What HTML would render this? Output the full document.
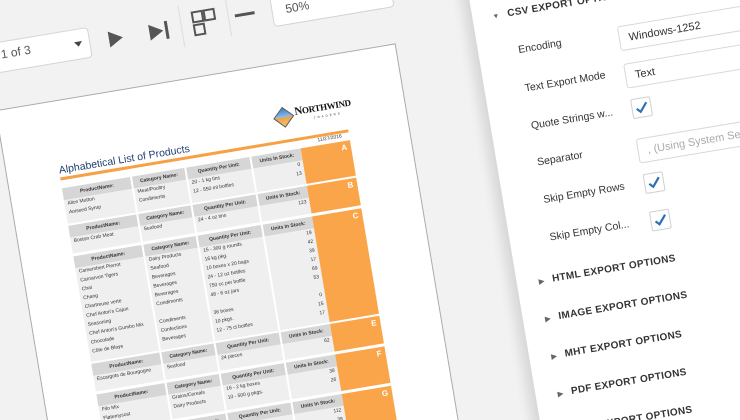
<!DOCTYPE html>
<html><head><meta charset="utf-8">
<style>
html,body{margin:0;padding:0;overflow:hidden;width:740px;height:420px;}
body{background:#f2f2f2;position:relative;font-family:"Liberation Sans",sans-serif;}
#w{position:absolute;left:0;top:0;width:1px;height:1px;transform-origin:0 0;transform:rotate(-9.5deg);}
.a{position:absolute;white-space:nowrap;}
.page{left:-23px;top:108px;width:404px;height:520px;background:#fff;border:1px solid #aaa;}
.panel{left:463px;top:-120px;width:420px;height:820px;background:#fff;box-shadow:-7px 0 12px rgba(0,0,0,.12);}
.sel{left:-60px;top:41px;width:140px;height:29px;background:#fff;border:1px solid #d4d4d4;border-radius:4px;}
.zoom{left:266px;top:30px;width:120px;height:40px;background:#fff;border:1px solid #d4d4d4;border-radius:4px;}
.tb{font-size:12px;color:#555;}
.sep{width:1px;background:#ddd;}
.lbl{font-size:10.5px;color:#333;left:503px;}
.inp{left:604px;width:220px;height:25px;border:1px solid #d8d8d8;border-radius:3px;background:#fff;font-size:11px;color:#333;line-height:25px;padding-left:9px;box-sizing:border-box;}
.cb{left:605px;width:20px;height:20px;border:1px solid #d0d0d0;border-radius:2px;background:#fff;box-sizing:border-box;}
.grp{left:485px;font-size:10px;font-weight:bold;color:#333;letter-spacing:.3px;}
.grp i{font-style:normal;font-size:7px;color:#666;margin-right:8px;}
table{border-collapse:separate;border-spacing:2px 0;table-layout:fixed;position:absolute;left:-2px;top:0;width:244px;}
td{font-size:5px;color:#333;padding:0 3px;overflow:hidden;white-space:nowrap;background:#efefef;line-height:9px;vertical-align:top;}
td.h{background:#d6d6d6;font-weight:bold;text-align:center;vertical-align:middle;}
td.r{text-align:right;}
.or{position:absolute;left:242px;top:0;width:50px;background:#fba54a;color:#fff;font-size:8px;font-weight:bold;text-align:right;box-sizing:border-box;padding:2px 4px;}
</style></head><body>
<div id="w">
  <div class="a sel"></div>
  <div class="a tb" style="left:-8px;top:47px;font-size:12px;">1 of 3</div>
  <div class="a" style="left:66px;top:54px;width:0;height:0;border-left:4px solid transparent;border-right:4px solid transparent;border-top:5px solid #444;"></div>
  <div class="a" style="left:101px;top:49px;width:0;height:0;border-top:8px solid transparent;border-bottom:8px solid transparent;border-left:14px solid #555;"></div>
  <div class="a" style="left:142px;top:49px;width:0;height:0;border-top:8px solid transparent;border-bottom:8px solid transparent;border-left:14px solid #555;"></div>
  <div class="a" style="left:158px;top:48px;width:3px;height:18px;background:#555;"></div>
  <div class="a sep" style="left:174px;top:35px;height:42px;"></div>
  <div class="a" style="left:186px;top:43px;width:8px;height:8px;border:2px solid #555;"></div>
  <div class="a" style="left:198px;top:43px;width:8px;height:8px;border:2px solid #555;"></div>
  <div class="a" style="left:186px;top:56px;width:8px;height:8px;border:2px solid #555;"></div>
  <div class="a sep" style="left:222px;top:32px;height:42px;"></div>
  <div class="a" style="left:229px;top:53px;width:20px;height:3px;background:#555;"></div>
  <div class="a zoom"></div>
  <div class="a tb" style="left:280px;top:49px;">50%</div>

  <div class="a page"></div>
  <div class="a" style="left:250px;top:152px;width:20px;height:20px;">
    <div style="position:absolute;left:3px;top:3px;width:13px;height:13px;transform:rotate(45deg);background:linear-gradient(135deg,#3a76c4,#8fc1ee 50%,#f0a040 51%,#f7c46f);border:1px solid #555;"></div>
  </div>
  <div class="a" style="left:272px;top:153px;font-family:'Liberation Serif',serif;font-size:11px;font-weight:bold;color:#111;letter-spacing:-.3px;">N<span style="font-size:9px">ORTHWIND</span></div>
  <div class="a" style="left:290px;top:166px;font-size:3px;letter-spacing:2px;color:#333;">TRADERS</div>
  <div class="a" style="left:30px;top:172px;font-size:10.5px;color:#1f3f6f;">Alphabetical List of Products</div>
  <div class="a" style="left:30px;top:185px;width:292px;height:3px;background:#f7a044;"></div>
  <div class="a" style="left:290px;top:188px;font-size:5px;color:#333;">11/27/2016</div>

  <div class="a" style="left:30px;top:196px;width:292px;height:36px;">
    <table style="height:36px"><colgroup><col style="width:69px"><col style="width:53px"><col style="width:64px"><col style="width:50px"></colgroup>
    <tr style="height:12px"><td class="h">ProductName:</td><td class="h">Category Name:</td><td class="h">Quantity Per Unit:</td><td class="h">Units In Stock:</td></tr>
    <tr><td>Alice Mutton<br>Aniseed Syrup</td><td>Meat/Poultry<br>Condiments</td><td>20 - 1 kg tins<br>12 - 550 ml bottles</td><td class="r">0<br>13</td></tr></table>
    <div class="or" style="height:36px">A</div>
  </div>
  <div class="a" style="left:30px;top:234px;width:292px;height:28px;">
    <table style="height:28px"><colgroup><col style="width:69px"><col style="width:53px"><col style="width:64px"><col style="width:50px"></colgroup>
    <tr style="height:12px"><td class="h">ProductName:</td><td class="h">Category Name:</td><td class="h">Quantity Per Unit:</td><td class="h">Units In Stock:</td></tr>
    <tr><td>Boston Crab Meat</td><td>Seafood</td><td>24 - 4 oz tins</td><td class="r">123</td></tr></table>
    <div class="or" style="height:28px">B</div>
  </div>
  <div class="a" style="left:30px;top:265px;width:292px;height:107px;">
    <table style="height:107px"><colgroup><col style="width:69px"><col style="width:53px"><col style="width:64px"><col style="width:50px"></colgroup>
    <tr style="height:12px"><td class="h">ProductName:</td><td class="h">Category Name:</td><td class="h">Quantity Per Unit:</td><td class="h">Units In Stock:</td></tr>
    <tr><td>Camembert Pierrot<br>Carnarvon Tigers<br>Chai<br>Chang<br>Chartreuse verte<br>Chef Anton's Cajun<br>Seasoning<br>Chef Anton's Gumbo Mix<br>Chocolade<br>Côte de Blaye</td>
    <td>Dairy Products<br>Seafood<br>Beverages<br>Beverages<br>Beverages<br>Condiments<br><br>Condiments<br>Confections<br>Beverages</td>
    <td>15 - 300 g rounds<br>16 kg pkg.<br>10 boxes x 20 bags<br>24 - 12 oz bottles<br>750 cc per bottle<br>48 - 6 oz jars<br><br>36 boxes<br>10 pkgs.<br>12 - 75 cl bottles</td>
    <td class="r">19<br>42<br>39<br>17<br>69<br>53<br><br>0<br>15<br>17</td></tr></table>
    <div class="or" style="height:107px">C</div>
  </div>
  <div class="a" style="left:30px;top:374px;width:292px;height:28px;">
    <table style="height:28px"><colgroup><col style="width:69px"><col style="width:53px"><col style="width:64px"><col style="width:50px"></colgroup>
    <tr style="height:12px"><td class="h">ProductName:</td><td class="h">Category Name:</td><td class="h">Quantity Per Unit:</td><td class="h">Units In Stock:</td></tr>
    <tr><td>Escargots de Bourgogne</td><td>Seafood</td><td>24 pieces</td><td class="r">62</td></tr></table>
    <div class="or" style="height:28px">E</div>
  </div>
  <div class="a" style="left:30px;top:405px;width:292px;height:37px;">
    <table style="height:37px"><colgroup><col style="width:69px"><col style="width:53px"><col style="width:64px"><col style="width:50px"></colgroup>
    <tr style="height:12px"><td class="h">ProductName:</td><td class="h">Category Name:</td><td class="h">Quantity Per Unit:</td><td class="h">Units In Stock:</td></tr>
    <tr><td>Filo Mix<br>Fløtemysost</td><td>Grains/Cereals<br>Dairy Products</td><td>16 - 2 kg boxes<br>10 - 500 g pkgs.</td><td class="r">38<br>26</td></tr></table>
    <div class="or" style="height:37px">F</div>
  </div>
  <div class="a" style="left:30px;top:445px;width:292px;height:120px;">
    <table style="height:120px"><colgroup><col style="width:69px"><col style="width:53px"><col style="width:64px"><col style="width:50px"></colgroup>
    <tr style="height:12px"><td class="h">ProductName:</td><td class="h">Category Name:</td><td class="h">Quantity Per Unit:</td><td class="h">Units In Stock:</td></tr>
    <tr><td>Geitost<br>Genen Shouyu<br>Gnocchi di nonna Alice<br>Gorgonzola Telino</td><td>Dairy Products<br>Condiments<br>Grains/Cereals<br>Dairy Products</td><td>500 g<br>24 - 250 ml bottles<br>24 - 250 g pkgs.<br>12 - 100 g pkgs</td><td class="r">112<br>39<br>21<br>0</td></tr></table>
    <div class="or" style="height:120px">G</div>
  </div>

  <div class="a panel"></div>
  <div class="a grp" style="top:92px;left:483px;"><i>▼</i>CSV EXPORT OPTIONS</div>
  <div class="a lbl" style="top:129px;">Encoding</div>
  <div class="a inp" style="top:128px;">Windows-1252</div>
  <div class="a lbl" style="top:168px;">Text Export Mode</div>
  <div class="a inp" style="top:166px;">Text</div>
  <div class="a lbl" style="top:206px;">Quote Strings w...</div>
  <div class="a cb" style="top:202px;"><svg width="18" height="18" viewBox="0 0 18 18"><path d="M4 9.5 L7.5 13 L14.5 4.5" fill="none" stroke="#2f6fb5" stroke-width="2.2"/></svg></div>
  <div class="a lbl" style="top:243px;">Separator</div>
  <div class="a inp" style="top:242px;color:#aaa;">, (Using System Separator)</div>
  <div class="a lbl" style="top:281px;">Skip Empty Rows</div>
  <div class="a cb" style="top:278px;"><svg width="18" height="18" viewBox="0 0 18 18"><path d="M4 9.5 L7.5 13 L14.5 4.5" fill="none" stroke="#2f6fb5" stroke-width="2.2"/></svg></div>
  <div class="a lbl" style="top:319px;">Skip Empty Col...</div>
  <div class="a cb" style="top:316px;"><svg width="18" height="18" viewBox="0 0 18 18"><path d="M4 9.5 L7.5 13 L14.5 4.5" fill="none" stroke="#2f6fb5" stroke-width="2.2"/></svg></div>
  <div class="a grp" style="top:361px;"><i>▶</i>HTML EXPORT OPTIONS</div>
  <div class="a grp" style="top:399px;"><i>▶</i>IMAGE EXPORT OPTIONS</div>
  <div class="a grp" style="top:437px;"><i>▶</i>MHT EXPORT OPTIONS</div>
  <div class="a grp" style="top:475px;"><i>▶</i>PDF EXPORT OPTIONS</div>
  <div class="a grp" style="top:513px;"><i>▶</i>RTF EXPORT OPTIONS</div>
</div>
</body></html>
